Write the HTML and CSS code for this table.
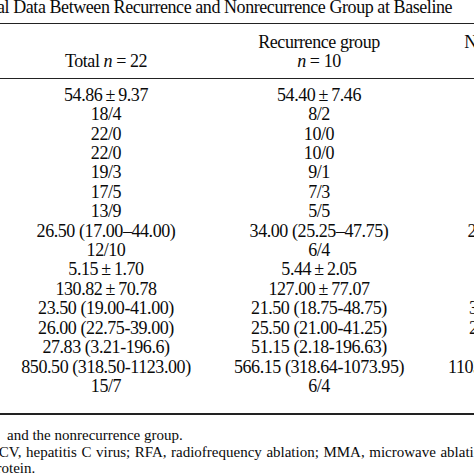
FILE: index.html
```html
<!DOCTYPE html>
<html>
<head>
<meta charset="utf-8">
<link rel="stylesheet" href="styles.css">
</head>
<body>
<div class="page">
  <div class="title">al Data Between Recurrence and Nonrecurrence Group at Baseline</div>
  <table class="data">
    <colgroup>
      <col class="c1"><col class="c2"><col class="c3">
    </colgroup>
    <thead>
      <tr>
        <th class="head"><br>Total <i>n</i> = 22</th>
        <th class="head">Recurrence group<br><i>n</i> = 10</th>
        <th class="head">Nonrecurrence group<br><i>n</i> = 12</th>
      </tr>
    </thead>
    <tbody>
      <tr><td class="top">54.86&#8201;±&#8201;9.37</td><td class="top">54.40&#8201;±&#8201;7.46</td><td class="top">55.25&#8201;±&#8201;10.96</td></tr>
      <tr><td>18/4</td><td>8/2</td><td>10/2</td></tr>
      <tr><td>22/0</td><td>10/0</td><td>12/0</td></tr>
      <tr><td>22/0</td><td>10/0</td><td>12/0</td></tr>
      <tr><td>19/3</td><td>9/1</td><td>10/2</td></tr>
      <tr><td>17/5</td><td>7/3</td><td>10/2</td></tr>
      <tr><td>13/9</td><td>5/5</td><td>8/4</td></tr>
      <tr><td>26.50 (17.00–44.00)</td><td>34.00 (25.25–47.75)</td><td>22.00 (15.25–40.75)</td></tr>
      <tr><td>12/10</td><td>6/4</td><td>6/6</td></tr>
      <tr><td>5.15&#8201;±&#8201;1.70</td><td>5.44&#8201;±&#8201;2.05</td><td>4.91&#8201;±&#8201;1.37</td></tr>
      <tr><td>130.82&#8201;±&#8201;70.78</td><td>127.00&#8201;±&#8201;77.07</td><td>134.00&#8201;±&#8201;68.15</td></tr>
      <tr><td>23.50 (19.00-41.00)</td><td>21.50 (18.75-48.75)</td><td>34.00 (19.25-40.00)</td></tr>
      <tr><td>26.00 (22.75-39.00)</td><td>25.50 (21.00-41.25)</td><td>28.50 (23.25-37.75)</td></tr>
      <tr><td>27.83 (3.21-196.6)</td><td>51.15 (2.18-196.63)</td><td>17.42 (3.45-86.20)</td></tr>
      <tr><td>850.50 (318.50-1123.00)</td><td>566.15 (318.64-1073.95)</td><td>1103.00 (325.00-1245.50)</td></tr>
      <tr class="last"><td class="bottom">15/7</td><td class="bottom">6/4</td><td class="bottom">9/3</td></tr>
    </tbody>
  </table>
  <div class="notes">
    <div class="note n1">and the nonrecurrence group.</div>
    <div class="note n2">HCV, hepatitis C virus; RFA, radiofrequency ablation; MMA, microwave ablation.</div>
    <div class="note n3">protein.</div>
  </div>
</div>
</body>
</html>
```

FILE: styles.css
```css
html, body {
  margin: 0;
  padding: 0;
  background: #ffffff;
}
body {
  font-family: "Liberation Serif", "Times New Roman", serif;
  color: #0a0a0a;
}
.page {
  width: 474px;
  height: 474px;
  overflow: hidden;
}
.title {
  font-size: 18px;
  letter-spacing: -0.43px;
  line-height: 19px;
  white-space: nowrap;
  margin-left: -3px;
  margin-top: -2px;
  height: 25px;
}
.data {
  border-collapse: collapse;
  width: 648px;
  table-layout: fixed;
  font-size: 18px;
  letter-spacing: -0.43px;
  line-height: 19.4px;
  white-space: nowrap;
}
.c1 { width: 212px; }
.c2 { width: 214px; }
.c3 { width: 222px; }
.data thead tr {
  border-top: 1px solid #222;
  border-bottom: 1.5px solid #222;
}
.head {
  font-weight: normal;
  text-align: center;
  padding: 9px 0 6px 0;
}
.data td {
  text-align: center;
  padding: 0;
}
.data td.top { padding-top: 7px; }
.data td.bottom { padding-bottom: 17px; }
.data tbody tr.last {
  border-bottom: 2px solid #222;
}
.notes {
  font-size: 15px;
  line-height: 16.5px;
  white-space: nowrap;
  padding-top: 12px;
}
.n1 { margin-left: 7px; }
.n2 { margin-left: -12px; word-spacing: 0.8px; }
.n3 { margin-left: -11px; }
```
